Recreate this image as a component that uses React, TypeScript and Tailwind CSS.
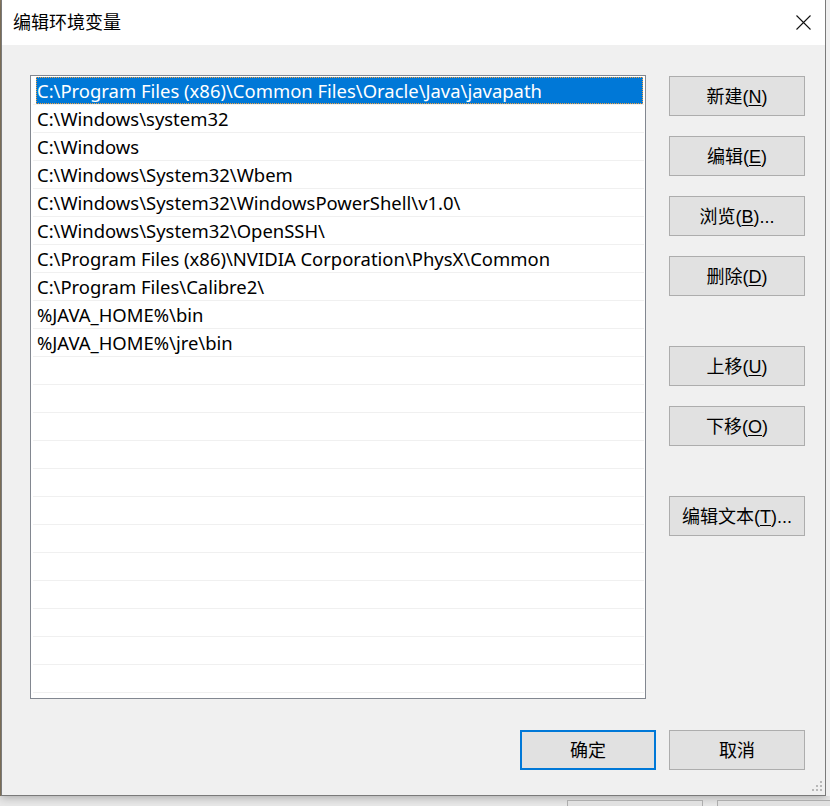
import * as React from "react";

const paths = [
  "C:\\Program Files (x86)\\Common Files\\Oracle\\Java\\javapath",
  "C:\\Windows\\system32",
  "C:\\Windows",
  "C:\\Windows\\System32\\Wbem",
  "C:\\Windows\\System32\\WindowsPowerShell\\v1.0\\",
  "C:\\Windows\\System32\\OpenSSH\\",
  "C:\\Program Files (x86)\\NVIDIA Corporation\\PhysX\\Common",
  "C:\\Program Files\\Calibre2\\",
  "%JAVA_HOME%\\bin",
  "%JAVA_HOME%\\jre\\bin",
];

const rows = [...paths, ...Array(22 - paths.length).fill("")];

function Btn({
  label,
  hot,
  tail,
  primary,
}: {
  label: string;
  hot?: string;
  tail?: string;
  primary?: boolean;
}) {
  return (
    <button
      className={
        "w-[136px] h-[40px] shrink-0 bg-[#e1e1e1] text-[18px] text-black flex items-center justify-center leading-none pt-[2px] " +
        (primary ? "border-2 border-[#0078d7]" : "border border-[#adadad]")
      }
    >
      <span>
        {label}
        {hot && (
          <>
            (<span className="underline underline-offset-2">{hot}</span>)
          </>
        )}
        {tail}
      </span>
    </button>
  );
}

export default function App() {
  return (
    <div
      className="w-[830px] h-[806px] bg-[#e8e8e8] overflow-hidden"
      style={{ fontFamily: '"Liberation Sans", "Noto Sans CJK SC", sans-serif' }}
    >
      <div className="flex h-[796px]">
        <div className="w-[1px] shrink-0 bg-[#8a7a60]" />
        {/* dialog */}
        <div className="w-[825px] h-[796px] shrink-0 flex flex-col border-l border-r border-b border-[#7a7a7a] shadow-[0_2px_8px_rgba(0,0,0,0.25)]">
          <div className="h-[45px] bg-white flex items-center justify-between pl-[11px] pr-[14px]">
            <span className="text-[18px] text-black pt-[2px]">编辑环境变量</span>
            <svg width="15" height="15" viewBox="0 0 15 15">
              <path d="M0.5 0.5L14.5 14.5M14.5 0.5L0.5 14.5" stroke="#111" strokeWidth="1.1" />
            </svg>
          </div>
          <div className="flex-1 bg-[#f0f0f0] flex flex-col relative">
            <div className="flex pt-[30px] pl-[28px]">
              {/* list */}
              <div className="w-[616px] h-[624px] shrink-0 border border-[#828790] bg-white pt-[1px] px-[1px] font-['Noto_Sans',sans-serif]">
                {rows.map((r, i) => (
                  <div key={i} className="h-[28px] flex flex-col">
                    <div className="h-[27px] flex">
                      {i === 0 ? (
                        <div className="ml-[4px] mr-[1px] flex-1 bg-[#0078d7] text-white text-[18.45px] leading-none flex items-center pt-[1px] pl-[1px] outline outline-1 outline-dotted outline-[#f0a040] -outline-offset-1">
                          {r}
                        </div>
                      ) : (
                        <div className="ml-[4px] flex-1 text-[18.45px] leading-none text-black flex items-center pt-[1px] pl-[1px]">
                          {r}
                        </div>
                      )}
                    </div>
                    <div className="h-[1px] bg-[#f0f0f0] ml-[1px]" />
                  </div>
                ))}
              </div>
              {/* right buttons */}
              <div className="ml-[23px] pt-[1px] flex flex-col">
                <Btn label="新建" hot="N" />
                <div className="h-[20px]" />
                <Btn label="编辑" hot="E" />
                <div className="h-[20px]" />
                <Btn label="浏览" hot="B" tail="..." />
                <div className="h-[20px]" />
                <Btn label="删除" hot="D" />
                <div className="h-[50px]" />
                <Btn label="上移" hot="U" />
                <div className="h-[20px]" />
                <Btn label="下移" hot="O" />
                <div className="h-[50px]" />
                <Btn label="编辑文本" hot="T" tail="..." />
              </div>
            </div>
            <div className="flex justify-end pr-[20px] pt-[31px] gap-[13px]">
              <Btn label="确定" primary />
              <Btn label="取消" />
            </div>
            <svg className="absolute right-[1px] bottom-[2px]" width="12" height="12" viewBox="0 0 12 12">
              <rect x="8" y="0" width="2" height="2" fill="#b8b8b8" />
              <rect x="4" y="4" width="2" height="2" fill="#b8b8b8" />
              <rect x="8" y="4" width="2" height="2" fill="#b8b8b8" />
              <rect x="0" y="8" width="2" height="2" fill="#b8b8b8" />
              <rect x="4" y="8" width="2" height="2" fill="#b8b8b8" />
              <rect x="8" y="8" width="2" height="2" fill="#b8b8b8" />
            </svg>
          </div>
        </div>
        <div className="flex-1 bg-[#f0f0f0]" />
      </div>
      <div className="flex h-[10px] pt-[4px] pl-[567px] gap-[14px]">
        <div className="w-[136px] h-[10px] shrink-0 border border-[#adadad] bg-[#e1e1e1]" />
        <div className="w-[136px] h-[10px] shrink-0 border border-[#adadad] bg-[#e1e1e1]" />
      </div>
    </div>
  );
}
